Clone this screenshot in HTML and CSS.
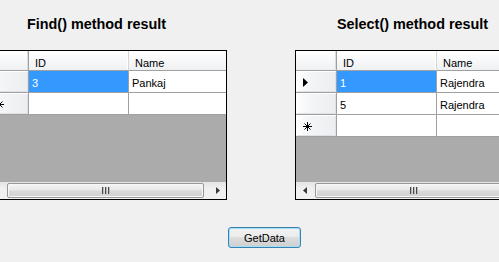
FILE: index.html
```html
<!DOCTYPE html>
<html>
<head>
<meta charset="utf-8">
<link rel="stylesheet" href="styles.css">
</head>
<body>
<div class="form">
  <div class="panels">
    <section class="panel panel-find">
      <h2 class="title">Find() method result</h2>
      <div class="dgv">
        <div class="dgv-row dgv-head">
          <div class="rh rh-head"></div>
          <div class="hc">ID</div>
          <div class="hc">Name</div>
        </div>
        <div class="dgv-row">
          <div class="rh"><svg class="ind" width="5" height="9" viewBox="0 0 5 9"><polygon points="0,0 5,4.5 0,9" fill="#000"/></svg></div>
          <div class="c sel">3</div>
          <div class="c">Pankaj</div>
        </div>
        <div class="dgv-row">
          <div class="rh"><svg class="star" width="9" height="9" viewBox="0 0 9 9"><path d="M4.5 0V9M0 4.5H9M1.5 1.5L7.5 7.5M7.5 1.5L1.5 7.5" stroke="#000" stroke-width="1" fill="none"/></svg></div>
          <div class="c"></div>
          <div class="c"></div>
        </div>
        <div class="dgv-fill"></div>
        <div class="hscroll">
          <div class="sb-btn"><svg width="4" height="7" viewBox="0 0 4 7"><polygon points="4,0 0,3.5 4,7" fill="#3a3a3a"/></svg></div>
          <div class="sb-track">
            <div class="sb-thumb"><svg width="9" height="7" viewBox="0 0 9 7"><path d="M1.5 0V7M4.5 0V7M7.5 0V7" stroke="#4a4a4a" stroke-width="1"/><path d="M2.5 0V7M5.5 0V7M8.5 0V7" stroke="#b8b8b8" stroke-width="1"/></svg></div>
          </div>
          <div class="sb-btn"><svg width="4" height="7" viewBox="0 0 4 7"><polygon points="0,0 4,3.5 0,7" fill="#3a3a3a"/></svg></div>
        </div>
      </div>
    </section>
    <section class="panel panel-select">
      <h2 class="title">Select() method result</h2>
      <div class="dgv">
        <div class="dgv-row dgv-head">
          <div class="rh rh-head"></div>
          <div class="hc">ID</div>
          <div class="hc">Name</div>
        </div>
        <div class="dgv-row">
          <div class="rh"><svg class="ind" width="5" height="9" viewBox="0 0 5 9"><polygon points="0,0 5,4.5 0,9" fill="#000"/></svg></div>
          <div class="c sel">1</div>
          <div class="c">Rajendra</div>
        </div>
        <div class="dgv-row">
          <div class="rh"></div>
          <div class="c">5</div>
          <div class="c">Rajendra</div>
        </div>
        <div class="dgv-row">
          <div class="rh"><svg class="star" width="9" height="9" viewBox="0 0 9 9"><path d="M4.5 0V9M0 4.5H9M1.5 1.5L7.5 7.5M7.5 1.5L1.5 7.5" stroke="#000" stroke-width="1" fill="none"/></svg></div>
          <div class="c"></div>
          <div class="c"></div>
        </div>
        <div class="dgv-fill"></div>
        <div class="hscroll">
          <div class="sb-btn"><svg width="4" height="7" viewBox="0 0 4 7"><polygon points="4,0 0,3.5 4,7" fill="#3a3a3a"/></svg></div>
          <div class="sb-track">
            <div class="sb-thumb"><svg width="9" height="7" viewBox="0 0 9 7"><path d="M1.5 0V7M4.5 0V7M7.5 0V7" stroke="#4a4a4a" stroke-width="1"/><path d="M2.5 0V7M5.5 0V7M8.5 0V7" stroke="#b8b8b8" stroke-width="1"/></svg></div>
          </div>
          <div class="sb-btn"><svg width="4" height="7" viewBox="0 0 4 7"><polygon points="0,0 4,3.5 0,7" fill="#3a3a3a"/></svg></div>
        </div>
      </div>
    </section>
  </div>
  <div class="actions">
    <button class="btn" type="button">GetData</button>
  </div>
</div>
</body>
</html>
```
FILE: styles.css
```css
html, body {
  margin: 0;
  padding: 0;
}
body {
  width: 499px;
  height: 262px;
  overflow: hidden;
  background: #f0f0f0;
  font-family: "Liberation Sans", Arial, sans-serif;
  color: #000;
}
.form {
  width: 499px;
  height: 262px;
  box-sizing: border-box;
  padding-top: 16px;
  overflow: hidden;
}
.panels {
  display: flex;
  gap: 68px;
  margin-left: -13px;
}
.panel {
  width: 240px;
  flex: none;
}
.title {
  margin: 0 0 18px 0;
  height: 16px;
  line-height: 16px;
  font-size: 14.4px;
  font-weight: bold;
  white-space: nowrap;
}
.panel-find .title { padding-left: 40px; }
.panel-select .title { padding-left: 42px; }

.dgv {
  width: 240px;
  height: 150px;
  box-sizing: border-box;
  border: 1px solid #000;
  background: #ababab;
  display: flex;
  flex-direction: column;
  overflow: hidden;
}
.dgv-row {
  display: flex;
  height: 22px;
  flex: none;
}
.dgv-head {
  height: 20px;
}
.rh {
  width: 41px;
  flex: none;
  box-sizing: border-box;
  border-right: 1px solid #a0a0a0;
  border-bottom: 1px solid #a0a0a0;
  background: linear-gradient(90deg, #ffffff 0%, #f3f4f6 40%, #eceef1 100%);
  box-shadow: inset 1px 1px 0 #ffffff, inset -1px -1px 0 #dfe1e4;
  display: flex;
  align-items: center;
  padding-left: 7px;
  padding-top: 2px;
}
.rh-head {
  background: linear-gradient(#ffffff 0%, #f7f8f9 50%, #eef0f2 100%);
  box-shadow: inset -1px 0 0 #dcdcdc;
}
.hc, .c {
  width: 100px;
  flex: none;
  box-sizing: border-box;
  border-right: 1px solid #a0a0a0;
  border-bottom: 1px solid #a0a0a0;
  display: flex;
  align-items: center;
  font-size: 11px;
  white-space: nowrap;
  overflow: hidden;
}
.hc {
  background: linear-gradient(#ffffff 0%, #f7f8f9 50%, #eef0f2 100%);
  border-right-color: #d5d5d5;
  box-shadow: inset -1px 0 0 #ffffff;
  padding-left: 6px;
  padding-top: 4px;
}
.c {
  background: #fff;
  padding-left: 3px;
  padding-top: 3px;
}
.c.sel {
  background: #3399ff;
  color: #fff;
}
.dgv-fill {
  flex: 1;
}
.hscroll {
  height: 17px;
  flex: none;
  display: flex;
  background: linear-gradient(#e4e4e4, #f0f0f0 40%, #f0f0f0);
}
.sb-btn {
  width: 17px;
  flex: none;
  display: flex;
  align-items: center;
  justify-content: center;
}
.sb-track {
  flex: 1;
  display: flex;
  align-items: center;
  padding-left: 2px;
}
.sb-thumb {
  width: 197px;
  height: 15px;
  flex: none;
  box-sizing: border-box;
  border: 1px solid #979797;
  border-radius: 2px;
  background: linear-gradient(#f4f4f4 0%, #e9e9e9 45%, #d9d9d9 55%, #d2d2d2 100%);
  box-shadow: inset 0 0 0 1px #f7f7f7;
  display: flex;
  align-items: center;
  justify-content: center;
}
.actions {
  margin-top: 27px;
  padding-left: 228px;
}
.btn {
  width: 73px;
  height: 21px;
  box-sizing: border-box;
  margin: 0;
  padding: 0;
  border: 1px solid #3c7fb1;
  border-radius: 3px;
  background: linear-gradient(#f2f2f2 0%, #ebebeb 50%, #dddddd 50%, #cfcfcf 100%);
  box-shadow: inset 0 0 0 1px #9fe0f7;
  font-family: "Liberation Sans", Arial, sans-serif;
  font-size: 11px;
  color: #000;
}
```
